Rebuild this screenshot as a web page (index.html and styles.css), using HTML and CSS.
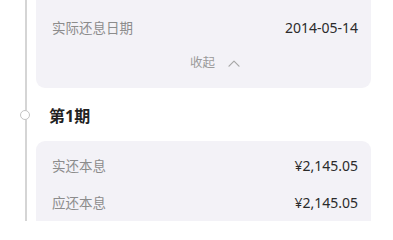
FILE: index.html
```html
<!DOCTYPE html>
<html lang="zh-CN">
<head>
<meta charset="utf-8">
<title>还款计划</title>
<link rel="stylesheet" href="styles.css">
</head>
<body>
<div class="timeline">
  <section class="period">
    <div class="card">
      <div class="row"><span class="label">应还本息</span><span class="value">¥2,145.05</span></div>
      <div class="row"><span class="label">应还息日期</span><span class="value">2014-05-14</span></div>
      <div class="row"><span class="label">实际还息日期</span><span class="value">2014-05-14</span></div>
      <div class="toggle">
        <span>收起</span>
        <svg class="chevron" viewBox="0 0 12 7" width="12" height="7"><path d="M1 6.2 L6 1.2 L11 6.2" fill="none" stroke="currentColor" stroke-width="1.2" stroke-linecap="round" stroke-linejoin="round"/></svg>
      </div>
    </div>
  </section>
  <section class="period">
    <h2 class="period-title"><span class="dot"></span>第1期</h2>
    <div class="card">
      <div class="row"><span class="label">实还本息</span><span class="value">¥2,145.05</span></div>
      <div class="row"><span class="label">应还本息</span><span class="value">¥2,145.05</span></div>
      <div class="row"><span class="label">应还日期</span><span class="value">2014-05-14</span></div>
    </div>
  </section>
</div>
</body>
</html>
```
FILE: styles.css
```css
html, body {
  margin: 0;
  padding: 0;
  background: #ffffff;
}
body {
  font-family: "Noto Sans", "Noto Sans CJK SC", sans-serif;
  overflow: hidden;
  height: 221px;
}
.timeline {
  position: relative;
  padding: 0 22px 0 36px;
  margin-top: -71px;
}
.timeline::before {
  content: "";
  position: absolute;
  left: 25px;
  top: 0;
  bottom: 0;
  width: 2px;
  background: #d5d5d5;
}
.card {
  background: #f3f2f7;
  border-radius: 9px;
  padding: 15px 13px 15px 16px;
  display: flex;
  flex-direction: column;
  gap: 17px;
}
.row {
  display: flex;
  justify-content: space-between;
  align-items: center;
  height: 20px;
  font-size: 13.5px;
  line-height: 20px;
}
.label {
  color: #8c8c8c;
}
.value {
  color: #2b2b2b;
  font-size: 14px;
}
.toggle {
  display: flex;
  justify-content: center;
  align-items: center;
  gap: 13px;
  height: 20px;
  margin-top: -2px;
  padding-left: 20px;
  font-size: 12.5px;
  line-height: 20px;
  color: #9a9a9a;
}
.chevron {
  color: #a6a6a6;
}
.period-title {
  position: relative;
  margin: 0 0 1px;
  padding: 16px 0 12px 13px;
  font-size: 16px;
  line-height: 24px;
  font-weight: 700;
  color: #222222;
}
.dot {
  position: absolute;
  left: -16px;
  top: 22px;
  width: 8px;
  height: 8px;
  border: 1.5px solid #c4c4c4;
  border-radius: 50%;
  background: #ffffff;
}
```
